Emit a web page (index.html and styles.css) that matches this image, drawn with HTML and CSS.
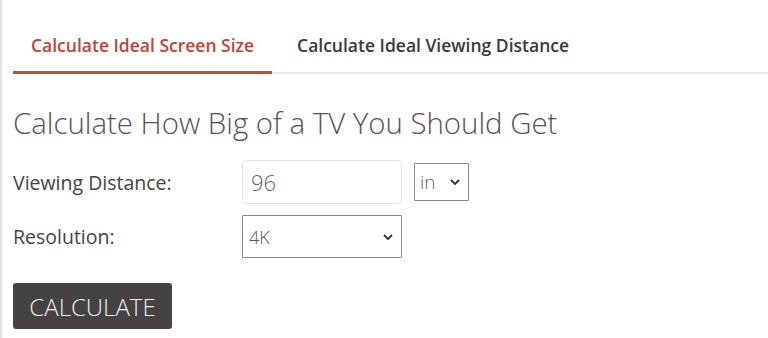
FILE: index.html
```html
<!DOCTYPE html>
<html lang="en">
<head>
    <meta charset="UTF-8">
    <title>TV Size Calculator</title>
    <link rel="stylesheet" href="styles.css">
</head>
<body>
    <div class="calculator">
        <ul class="tabs">
            <li><a href="#" class="tab active">Calculate Ideal Screen Size</a></li>
            <li><a href="#" class="tab">Calculate Ideal Viewing Distance</a></li>
        </ul>

        <div class="panel">
            <h2>Calculate How Big of a TV You Should Get</h2>

            <div class="form-row">
                <label for="distance">Viewing Distance:</label>
                <input type="text" id="distance" class="text-input" value="96">
                <select id="unit" class="unit-select">
                    <option>in</option>
                    <option>ft</option>
                    <option>cm</option>
                    <option>m</option>
                </select>
            </div>

            <div class="form-row">
                <label for="resolution">Resolution:</label>
                <select id="resolution" class="res-select">
                    <option>4K</option>
                    <option>1080p</option>
                    <option>720p</option>
                </select>
            </div>

            <button class="calc-btn">CALCULATE</button>
        </div>
    </div>
</body>
</html>
```

FILE: styles.css
```css
* {
    margin: 0;
    padding: 0;
    box-sizing: border-box;
}

body {
    font-family: "Open Sans", "Noto Sans", Arial, sans-serif;
    background-color: #fff;
    color: #444;
    border-left: 2px solid #e2e2e2;
    min-height: 338px;
}

.calculator {
    padding: 18px 0 0 11px;
}

/* Tabs */
.tabs {
    list-style: none;
    display: flex;
    border-bottom: 2px solid #e8e8e8;
}

.tabs li {
    margin-bottom: -2px;
}

.tab {
    display: block;
    padding: 15px 18px 14px;
    font-size: 17.5px;
    line-height: 24px;
    font-weight: 600;
    color: #3a3a3a;
    text-decoration: none;
    border-bottom: 3px solid transparent;
}

.tab.active {
    color: #c0453a;
    border-bottom-color: #c9473b;
}

.tabs li + li .tab {
    padding-left: 25px;
}

/* Panel */
.panel {
    padding-top: 30px;
    padding-right: 20px;
}

.panel h2 {
    font-size: 29.4px;
    font-weight: 300;
    color: #555;
    line-height: 38px;
    margin-bottom: 18px;
}

.form-row {
    display: flex;
    align-items: center;
    margin-bottom: 11px;
}

.form-row label {
    width: 229px;
    font-size: 19.5px;
    color: #444;
}

.text-input {
    width: 160px;
    height: 44px;
    border: 1px solid #e4e4e4;
    border-radius: 4px;
    padding: 0 8px;
    font-family: inherit;
    font-size: 22px;
    font-weight: 300;
    color: #666;
}

select {
    font-family: inherit;
    color: #666;
    background-color: #fff;
    border: 1px solid #8a8a8a;
    border-radius: 1px;
    appearance: none;
    background-image: url("data:image/svg+xml,%3Csvg xmlns='http://www.w3.org/2000/svg' width='10' height='6' viewBox='0 0 10 6'%3E%3Cpath d='M1 1l4 4 4-4' fill='none' stroke='%23333' stroke-width='1.8'/%3E%3C/svg%3E");
    background-repeat: no-repeat;
    background-position: right 8px center;
}

.unit-select {
    width: 55px;
    height: 38px;
    margin-left: 12px;
    padding-left: 5px;
    font-size: 19px;
    font-weight: 300;
}

.res-select {
    width: 160px;
    height: 43px;
    padding-left: 6px;
    font-size: 18px;
    font-weight: 300;
    color: #555;
}

.calc-btn {
    margin-top: 14px;
    width: 159px;
    height: 46px;
    background-color: #444342;
    color: #eee;
    border: none;
    border-radius: 3px;
    font-family: inherit;
    font-size: 24px;
    font-weight: 300;
    cursor: pointer;
}
```
